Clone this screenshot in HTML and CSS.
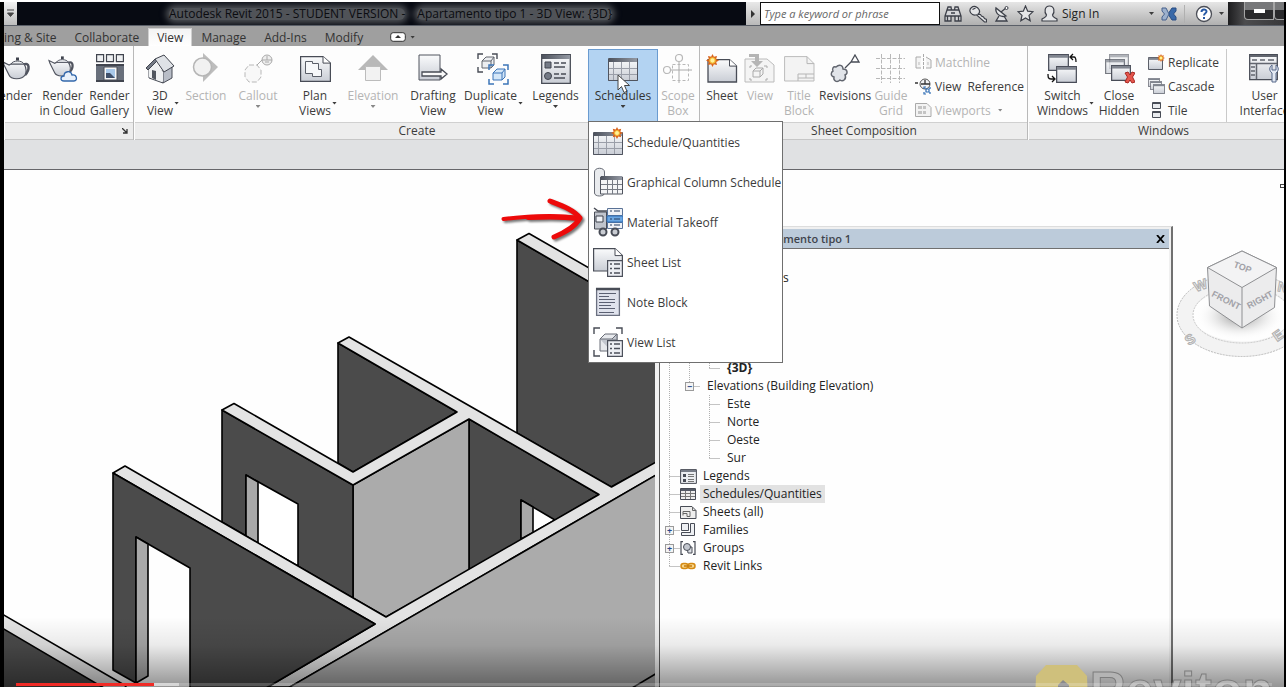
FILE: index.html
```html
<!DOCTYPE html>
<html lang="en">
<head>
<meta charset="utf-8">
<title>Autodesk Revit 2015</title>
<link rel="stylesheet" href="styles.css">
</head>
<body>
<svg class="defs" aria-hidden="true">
  <defs>
    <linearGradient id="metal" x1="0" y1="0" x2="0" y2="1"><stop offset="0" stop-color="#fafbfc"/><stop offset="1" stop-color="#c9cdd5"/></linearGradient>
    <linearGradient id="head" x1="0" y1="0" x2="1" y2="0"><stop offset="0" stop-color="#4d525d"/><stop offset="1" stop-color="#9499a3"/></linearGradient>
    <symbol id="spark" viewBox="0 0 12 12"><path d="M6 0l1.3 2.6L10.2 1.800 9.400 4.700 12 6 9.400 7.300l.8 2.900-2.900-.8L6 12 4.700 9.400l-2.900.8.8-2.900L0 6l2.600-1.300L1.800 1.800l2.900.8z" fill="#d9641c"/><circle cx="6" cy="6" r="2.500" fill="#fff29a" stroke="#f3b52c"/></symbol>
    <symbol id="grid" viewBox="0 0 30 24"><path d="M.5 1.500h29v22H.5z" fill="url(#metal)" stroke="#50545f"/><path d="M1 1h28v4H1z" fill="url(#head)"/><path d="M1 11.500h28M1 17.500h28M5.500 5v18M13.500 5v18M21.500 5v18" stroke="#9a9ea8" fill="none"/><path d="M.5 23.500h29" stroke="#50545f"/></symbol>
    <symbol id="teapot" viewBox="0 0 30 26"><path d="M22 9c7-4 7 5 2 10" fill="none" stroke="#50545f" stroke-width="2.500"/><path d="M8 9L2 6l1 3 5 10c2 5 13 5 16 0 2-4 1-8-1-11H10z" fill="url(#metal)" stroke="#50545f" stroke-width="1.200"/><path d="M10 8c2-4 11-4 13 0z" fill="#eceef1" stroke="#50545f"/><path d="M15 3h3" stroke="#3f434d" stroke-width="3"/></symbol>
    <symbol id="win" viewBox="0 0 22 18" preserveAspectRatio="none"><path d="M.7.700h20.600v16.600H.7z" fill="url(#metal)" stroke="#484c57" stroke-width="1.300"/><path d="M1 1h20v3H1z" fill="#80858f"/></symbol>
    <symbol id="listcard" viewBox="0 0 16 17"><path d="M.6.600h14.800v15.800H.6z" fill="#eceef3" stroke="#4c505b" stroke-width="1.200"/><path d="M3 4h2m2 0h6M3 8.500h2m2 0h6M3 13h2m2 0h6" stroke="#4c505b" stroke-width="1.300"/></symbol>
  </defs>
</svg>

<div class="app">
  <header class="titlebar">
    <button class="qat" aria-label="Customize Quick Access Toolbar"><svg width="9" height="9" viewBox="0 0 9 9"><path d="M1 1h7M1.500 4h6L4.500 7.500z" stroke="#444" fill="#444"/></svg></button>
    <h1 class="doc-title"><span>Autodesk Revit 2015 - STUDENT VERSION -</span><span>Apartamento tipo 1 - 3D View: {3D}</span></h1>
    <div class="infocenter">
      <button class="expand" aria-label="Collapse search"><svg width="6" height="8" viewBox="0 0 6 8"><path d="M1 0l4 4-4 4z" fill="#333"/></svg></button>
      <input class="search" type="text" aria-label="Search" placeholder="Type a keyword or phrase">
      <div class="tools">
        <button aria-label="Search"><svg width="18" height="18" viewBox="0 0 18 18"><path d="M3 5l1-3h3l.5 3h3L11 2h3l1 3 2 6v5h-6v-5H7v5H1v-5zM3 5h4.500M10.500 5H15M1 11h6M11 11h6M3.500 11v5M14.500 11v5M7 8h4" fill="#d5d6d9" stroke="#3d4049" stroke-width="1.300"/></svg></button>
        <button aria-label="Subscription Center"><svg width="18" height="18" viewBox="0 0 18 18"><path d="M8.500 9.500c2-1 2.500-3 1.500-5-1.500-3-5-4-7.500-2s-2 5.500 1 7c1.500.8 3 .6 4 .3L15.500 17h2v-2.500l-2-1-1-1.500-2-1-1-1.500zM3.500 4.500L6.500 3" fill="#e3e4e6" stroke="#3d4049" stroke-width="1.200"/></svg></button>
        <button aria-label="Communication Center"><svg width="16" height="17" viewBox="0 0 16 17"><path d="M5 11l-3 5h11l-3-5" fill="#dcdde0" stroke="#3d4049" stroke-width="1.300"/><path d="M2 3c-1 5 4 10 10 8z" fill="#e6e7e9" stroke="#3d4049" stroke-width="1.300"/><path d="M7 7l5-4" stroke="#3d4049" stroke-width="1.300"/><circle cx="12.500" cy="3" r="1.500" fill="#fff" stroke="#3d4049"/></svg></button>
        <button aria-label="Favorites"><svg width="17" height="17" viewBox="0 0 17 17"><path d="M8.500 1l2.200 5.200 5.300.5-4 3.700 1.200 5.400-4.700-2.900-4.700 2.900L5 10.400 1 6.700l5.300-.5z" fill="#e5e6e8" stroke="#3d4049" stroke-width="1.200"/></svg></button>
        <button class="signin"><svg width="17" height="17" viewBox="0 0 17 17"><path d="M5.500 10C3 7 3.500 1 8.500 1s5.500 6 3 9c0 2 1 2 4.500 4v2H1v-2c3.500-2 4.500-2 4.500-4z" fill="#e5e6e8" stroke="#3d4049" stroke-width="1.200"/></svg>Sign In<i class="caret"></i></button>
        <button aria-label="Exchange Apps"><svg width="16" height="14" viewBox="0 0 16 14"><path d="M8 5.500L11 1h4v3l-2.500 3 2.500 3v3h-4L8 8.500z" fill="#3868a8" stroke="#284c83"/><path d="M1 1h4l3 6-3 6H1v-3l2.500-3L1 4z" fill="#9cb0cc" stroke="#46618d"/></svg></button>
        <button class="help" aria-label="Help"><svg width="18" height="18" viewBox="0 0 18 18"><circle cx="9" cy="9" r="7.500" fill="#fff" stroke="#4b4e57" stroke-width="1.300"/><path d="M6.500 7c0-3.500 5-3.200 5-.5C11.500 8.500 9 8 9 10.500M9 12v2" fill="none" stroke="#2759a5" stroke-width="2"/></svg><i class="caret"></i></button>
      </div>
    </div>
    <div class="window-controls">
      <button aria-label="Minimize"><svg width="11" height="4"><path d="M0 0h11v4H0z" fill="#fff"/></svg></button><button aria-label="Restore"><svg width="9" height="12" viewBox="0 0 9 12"><path d="M1 4h8v7H1zM4 4V1h5" fill="none" stroke="#ddd" stroke-width="2"/></svg></button>
    </div>
  </header>

  <nav class="tabs">
    <button>ing &amp; Site</button><button>Collaborate</button><button class="active">View</button><button>Manage</button><button>Add-Ins</button><button>Modify</button>
    <button class="toggle" aria-label="Minimize ribbon"><svg width="16" height="10" viewBox="0 0 16 10"><rect x=".7" y=".7" width="14.600" height="8.600" rx="2.500" fill="#fff" stroke="#333"/><path d="M5 6l3-3 3 3z" fill="#333"/></svg><i class="caret"></i></button>
  </nav>

  <div class="ribbon">
    <section class="panel presentation">
      <div class="tools-row">
        <button><svg width="30" height="26"><use href="#teapot"/></svg><span class="label">ender</span></button>
        <button><svg width="32" height="27" viewBox="0 0 32 27"><use href="#teapot" width="28" height="24"/><path d="M17 26c-4 0-4-5 0-5 0-5 7-6 8-1 5-1 6 6 2 6z" fill="#e8f0fa" stroke="#3267ab" stroke-width="1.300"/></svg><span class="label">Render<br>in Cloud</span></button>
        <button><svg width="28" height="29" viewBox="0 0 28 29"><path d="M.6.600h7v7h-7zM10.500.600h7v7h-7zM20.400.600h7v7h-7z" fill="#eef0f2" stroke="#41454f" stroke-width="1.200"/><path d="M0 10h28v18H0z" fill="#69707c"/><path d="M0 10h28v2H0zM0 26h28v2H0z" fill="#41454f"/><path d="M8 13h13v13H8z" fill="#f7f7f7" stroke="#4a4e58"/><path d="M10 15h9v9h-9z" fill="#a9c9ea"/><path d="M10 19l4 0 5 5h-9z" fill="#40506a"/></svg><span class="label">Render<br>Gallery</span></button>
      </div>
      <h2><button class="launcher" aria-label="Graphic display options"><svg width="6" height="6" viewBox="0 0 6 6"><path d="M0 0l5 5M5 1v4H1" fill="none" stroke="#333" stroke-width="1.300"/></svg></button></h2>
    </section>

    <section class="panel create">
      <div class="tools-row">
        <button><svg width="30" height="30" viewBox="0 0 30 30"><path d="M4 13l14 4v12L4 24z" fill="#eef0f2" stroke="#484c56"/><path d="M18 17l9-5v12l-9 5z" fill="#b8bdc7" stroke="#484c56"/><path d="M4 14l6-7 8 11v10L4 23z" fill="#eef0f2"/><path d="M1 14L10 5l2 2-9 9z" fill="#747a86" stroke="#41454f"/><path d="M10 5l9-4 10 11-10 6z" fill="#dfe2e6" stroke="#41454f"/><path d="M7 16l4 1v9l-4-2z" fill="#50555f"/></svg><span class="label">3D<br>View</span><i class="caret"></i></button>
        <button disabled><svg width="28" height="31" viewBox="0 0 28 31"><path d="M11 0l15 14-15 15z" fill="#bdbdbd"/><circle cx="10.500" cy="14" r="9" fill="#f1f1f1" stroke="#b5b5b5" stroke-width="1.500"/></svg><span class="label">Section</span></button>
        <button disabled class="below"><svg width="30" height="30" viewBox="0 0 30 30"><path d="M6 11h8l4 5v7l-4 5H6l-4-5v-7z" fill="#f8f8f8" stroke="#b8b8b8" stroke-dasharray="5 2"/><path d="M14 11l5-5" stroke="#aaa"/><circle cx="24" cy="6" r="5" fill="#eee" stroke="#aaa"/><path d="M19 6h10M24 2v4M22 8h4" stroke="#aaa"/></svg><span class="label">Callout</span><i class="caret"></i></button>
        <button><svg width="31" height="26" viewBox="0 0 31 26"><path d="M.6.600H23l7.400 6.500v18.300H.6z" fill="url(#metal)" stroke="#484c56" stroke-width="1.200"/><path d="M23 .6v6.500h7" fill="#fff" stroke="#484c56"/><path d="M5.500 5.500h7v2h6v6h3v7h-9v-3h-7z" fill="#f7f8fa" stroke="#5a5e68"/></svg><span class="label">Plan<br>Views</span><i class="caret"></i></button>
        <button disabled class="below"><svg width="30" height="27" viewBox="0 0 30 27"><path d="M15 0l15 15H0z" fill="#b8b8b8"/><path d="M7.500 11.500h15v14h-15z" fill="#f2f2f2" stroke="#bcbcbc"/></svg><span class="label">Elevation</span><i class="caret"></i></button>
        <button><svg width="31" height="29" viewBox="0 0 31 29"><path d="M1 1h21v25H1z" fill="url(#metal)" stroke="#50545f"/><path d="M4 18h19v-3l6 5-6 5v-3H4z" fill="#fafafa" stroke="#484c56" stroke-width="1.300"/></svg><span class="label">Drafting<br>View</span></button>
        <button><svg width="32" height="32" viewBox="0 0 32 32"><path d="M1 6V1h5m9 0h5v5M1 14v5h5" fill="none" stroke="#484c56" stroke-width="1.400"/><path d="M5 8l4-4h8v8l-3 3H5z" fill="#eceef1" stroke="#62666f"/><path d="M5 8h9v7m0-7l3-4" fill="none" stroke="#62666f"/><path d="M12 17v-5h5m9 0h5v5m0 9v5h-5m-9 0h-5v-5" fill="none" stroke="#3c75b8" stroke-width="1.500"/><path d="M16 20l4-4h8v8l-3 3h-9z" fill="#d5e7f8" stroke="#3c75b8"/><path d="M16 20h9v7m0-7l3-4" fill="none" stroke="#3c75b8"/></svg><span class="label">Duplicate<br>View</span><i class="caret"></i></button>
        <button class="below"><svg width="30" height="30" viewBox="0 0 30 30"><path d="M.7.700h28.600v28.600H.7z" fill="url(#metal)" stroke="#484c56" stroke-width="1.300"/><path d="M1 1h28v4H1z" fill="url(#head)"/><path d="M4 8h6v6H4z" fill="#747a86" stroke="#41454f"/><circle cx="7" cy="22" r="3.500" fill="#747a86" stroke="#41454f"/><path d="M13 9h5m2 0h5M13 13h11M13 20h5m2 0h5M13 24h11" stroke="#484c56" stroke-width="1.300"/></svg><span class="label">Legends</span><i class="caret"></i></button>
        <div class="dropdown">
          <button class="below open" aria-haspopup="true" aria-expanded="true"><svg width="30" height="24"><use href="#grid"/></svg><span class="label">Schedules</span><i class="caret"></i></button>
          <svg class="pointer" width="13" height="20" viewBox="0 0 13 20"><path d="M1 1v15l3.500-3.500L7 18.500l3-1.200-2.500-5.800h5z" fill="#fff" stroke="#444"/></svg>
          <ul class="menu">
            <li><button><svg width="30" height="30" viewBox="0 0 30 30"><use href="#grid" y="4" width="30" height="24"/><use href="#spark" x="18" y="0" width="12" height="12"/></svg>Schedule/Quantities</button></li>
            <li><button><svg width="30" height="30" viewBox="0 0 30 30"><path d="M1.500 5c0-5 10-5 10 0v21c0 4-10 4-10 0z" fill="#e9ebee" stroke="#686c76"/><path d="M7.500 10h22v17h-22z" fill="#f4f5f7" stroke="#50545f"/><path d="M8 9h21v4H8z" fill="url(#head)"/><path d="M8 17.500h21M8 22.500h21M14.500 13v14M19.500 13v14M24.500 13v14" stroke="#757a84"/></svg>Graphical Column Schedule</button></li>
            <li><button><svg width="30" height="30" viewBox="0 0 30 30"><path d="M1.500 5h12v17h-12z" fill="#c0c4cc" stroke="#484c56"/><path d="M1 1l4 3h9" fill="none" stroke="#484c56" stroke-width="1.500"/><path d="M3 9h7v6H3z" fill="#f0f3f8" stroke="#3f434d"/><path d="M14.500 1.500h15v7h-15zM14.500 15.500h15v6h-15z" fill="#eef1f6" stroke="#5a7296"/><path d="M14 9h16v6H14z" fill="#6aa6e2" stroke="#2f6db3"/><path d="M17 4h2m2 0h6M17 12h2m2 0h6M17 18h2m2 0h6" stroke="#263f63"/><circle cx="10" cy="25" r="3.500" fill="#c9ccd2" stroke="#484c56" stroke-width="2"/><circle cx="22" cy="25" r="3.500" fill="#c9ccd2" stroke="#484c56" stroke-width="2"/></svg>Material Takeoff</button></li>
            <li><button><svg width="30" height="30" viewBox="0 0 30 30"><path d="M.6 1.600H22l7.400 7V24H.6z" fill="url(#metal)" stroke="#484c56" stroke-width="1.200"/><path d="M22 1.600v7h7" fill="#fff" stroke="#484c56"/><use href="#listcard" x="14" y="13" width="16" height="17"/></svg>Sheet List</button></li>
            <li><button><svg width="30" height="30" viewBox="0 0 30 30"><path d="M3.600 1.600h22.800v26.800H3.600z" fill="#dfe2ec" stroke="#6b7080" stroke-width="1.300"/><path d="M3 2h24" stroke="#484c56" stroke-width="2.500"/><path d="M6 6.500h17M6 9.500h10M6 12.500h16M6 15.500h16M6 18.500h12M6 21.500h16M6 25.500h15" stroke="#5b6072"/></svg>Note Block</button></li>
            <li><button><svg width="30" height="30" viewBox="0 0 30 30"><path d="M1 7V1h6m16 0h6v6M1 23v6h6" fill="none" stroke="#484c56" stroke-width="1.400"/><path d="M7 12l5-5h12v17H7z" fill="#e7e9ed" stroke="#686c76"/><path d="M7 12h12l5-5v6h-5v12" fill="#c2c6ce" stroke="#686c76"/><use href="#listcard" x="14" y="13" width="16" height="17"/></svg>View List</button></li>
          </ul>
        </div>
        <button disabled><svg width="30" height="30" viewBox="0 0 30 30"><circle cx="16" cy="4" r="3.500" fill="none" stroke="#b8b8b8" stroke-width="1.200"/><circle cx="4" cy="16" r="3.500" fill="none" stroke="#b8b8b8" stroke-width="1.200"/><path d="M16 8v21M8 16h21" stroke="#aaa"/><path d="M9.500 10.500h16v16h-16z" fill="none" stroke="#b8b8b8" stroke-dasharray="3 2"/></svg><span class="label">Scope<br>Box</span></button>
      </div>
      <h2>Create</h2>
    </section>

    <section class="panel sheets">
      <div class="tools-row">
        <button><svg width="32" height="30" viewBox="0 0 32 30"><path d="M2 5.600h21.500l7 6.500V28H2z" fill="url(#metal)" stroke="#484c56" stroke-width="1.300"/><path d="M23.500 5.600v6.500h7" fill="#fff" stroke="#484c56"/><use href="#spark" x="0" y="0" width="13" height="13"/></svg><span class="label">Sheet</span></button>
        <button disabled><svg width="32" height="30" viewBox="0 0 32 30"><path d="M1 5h22l7 6v17H1z" fill="#f4f4f4" stroke="#bbb"/><path d="M5 0h10v7h4l-6 6-6-6h4V3H5z" fill="#b5b5b5"/><path d="M6 14v-2h2m12 0h3v2M6 24v2h2m13 0h2v-2M9 17l3-3h7v6l-3 3H9zM9 17h7v6m0-6l3-3" fill="none" stroke="#aaa"/></svg><span class="label">View</span></button>
        <button disabled><svg width="31" height="26" viewBox="0 0 31 26"><path d="M.6.600H23l7 7V25H.6z" fill="#f3f3f3" stroke="#bbb"/><path d="M23 .6v7h7M14 18h16M14 22h16M14 18v7M22 18v4" fill="none" stroke="#b5b5b5"/></svg><span class="label">Title<br>Block</span></button>
        <button><svg width="30" height="30" viewBox="0 0 30 30"><path d="M6 13c3-3 7-2 7 2 5 0 5 5 2 6 2 4-2 7-5 5-3 3-7 1-6-3-4-1-3-5-1-6-1-2 0-5 3-4z" fill="#e1e4e9" stroke="#62666f" stroke-width="1.400"/><path d="M15 14l7-7M25 1l4 7h-8z" fill="#fff" stroke="#484c56" stroke-width="1.300"/></svg><span class="label">Revisions</span></button>
        <button disabled><svg width="30" height="30" viewBox="0 0 30 30"><path d="M5.500 0v29M14.500 0v29M23.500 0v29M0 4.500h29M0 14.500h29M0 24.500h29" fill="none" stroke="#b8b8b8" stroke-dasharray="4 1.500"/></svg><span class="label">Guide<br>Grid</span></button>
        <div class="stack">
          <button disabled><svg width="17" height="16" viewBox="0 0 17 16"><path d="M6 3H1v11h5M11 3l5 3v8h-5" fill="#f4f4f4" stroke="#aaa"/><path d="M8.500 0v16" stroke="#aaa" stroke-dasharray="3 1"/><path d="M4 8v3M13 8v3" stroke="#bbb"/></svg>Matchline</button>
          <button><svg width="17" height="17" viewBox="0 0 17 17"><circle cx="10" cy="6" r="5" fill="#f4f4f4" stroke="#555"/><path d="M0 5h3M6 6h9M10 2v4" stroke="#333" stroke-width="1.300"/><path d="M9 11V9h2m4 2V9M9 14v2h2m4-2v2m-4-5h3v3h-3z" fill="none" stroke="#2d6cb4" stroke-width="1.200"/></svg>View&nbsp; Reference</button>
          <button disabled><svg width="17" height="14" viewBox="0 0 17 14"><path d="M.5.500H12l4 4v9H.5z" fill="#f3f3f3" stroke="#aaa"/><path d="M3 3h4v3H3zM8 3h3v3H8zM3 8h4v3H3zM8 8h3v3H8z" fill="#c4c4c4"/></svg>Viewports<i class="caret"></i></button>
        </div>
      </div>
      <h2>Sheet Composition</h2>
    </section>

    <section class="panel windows">
      <div class="tools-row">
        <button><svg width="32" height="31" viewBox="0 0 32 31"><use href="#win" x="1" y="1" width="21" height="17"/><use href="#win" x="9" y="13" width="21" height="17"/><path d="M24 4h3c2 0 2 2 2 5M26 1l-3 3 3 3M7 26H4c-3 0-3-2-3-5M5 23l3 3-3 3" fill="none" stroke="#111" stroke-width="1.300"/></svg><span class="label">Switch<br>Windows</span><i class="caret"></i></button>
        <button><svg width="31" height="31" viewBox="0 0 31 31"><use href="#win" x="5" y="1" width="20" height="15" opacity=".6"/><use href="#win" x="1" y="6" width="20" height="15" opacity=".75"/><use href="#win" x="7" y="12" width="20" height="16"/><path d="M21 20l3-1 2 3 2-3 3 1-2.500 4 2.500 5-3 1-2-3-2 3-3-1 2.500-5z" fill="#e5564d" stroke="#a92822"/></svg><span class="label">Close<br>Hidden</span></button>
        <div class="stack">
          <button><svg width="17" height="17" viewBox="0 0 17 17"><use href="#win" x="0" y="3" width="15" height="13"/><use href="#spark" x="9" y="0" width="8" height="8"/></svg>Replicate</button>
          <button><svg width="17" height="16" viewBox="0 0 17 16"><use href="#win" x="0" y="0" width="12" height="9"/><use href="#win" x="2" y="3" width="12" height="9"/><use href="#win" x="5" y="6" width="12" height="10"/></svg>Cascade</button>
          <button><svg width="17" height="16" viewBox="0 0 17 16"><path d="M4.500.500h8v6h-8zM4.500 9.500h8v6h-8z" fill="#e9ebee" stroke="#484c56"/><path d="M5 1.500h7M5 10.500h7" stroke="#484c56"/></svg>Tile</button>
        </div>
        <button class="ui"><svg width="32" height="30" viewBox="0 0 32 30"><path d="M.7.700h27.600v25H.7z" fill="url(#metal)" stroke="#484c56" stroke-width="1.300"/><path d="M1 1h27v2H1z" fill="#62666f"/><path d="M3 6h5M11 6h5M19 6h6M1 9.500h27M7.500 9v16M2 13h4M2 17h4M2 21h4" stroke="#62666f" stroke-width="1.500"/><path d="M23 28V19c-3-2-3-6 0-8v5h4v-5c3 2 3 6 0 8v9z" fill="#e3e9f3" stroke="#56688a"/></svg><span class="label">User<br>Interface</span></button>
      </div>
      <h2>Windows</h2>
    </section>
  </div>

  <div class="options-bar"></div>

  <main class="canvas">
    <svg class="model" width="651" height="517" viewBox="4 170 651 517" role="img" aria-label="3D view of walls">
      <g stroke="#000" stroke-width="1.600" stroke-linejoin="round">
        <path d="M517 240L657 321V462L611 487 517 433z" fill="#4b4b4b"/>
        <path d="M517 240L529 233.500 657 307V321z" fill="#e3e3e3"/>
        <path d="M338 343V463L353 472 457 412z" fill="#4b4b4b"/>
        <path d="M469 419V571L599 494.500z" fill="#4b4b4b"/>
        <path d="M521 500L555 520 533 532.500 521 539z" fill="#fff"/>
        <path d="M521 500L533 507V532.500L521 539z" fill="#a9a9a9"/>
        <path d="M353 485L469 419V571L386 617 353 598z" fill="#ababab"/>
        <path d="M222 410V522L353 598V485z" fill="#4b4b4b"/>
        <path d="M246 475L298 504V566L246 536z" fill="#fff"/>
        <path d="M246 475L258 482V543L246 536z" fill="#a9a9a9"/>
        <path d="M338 343L349 337 611.500 487 657 461.500V474.500L290 687H268L375 624 113 473 125 466 386 617 599 494.500 469 419 353 485 222 410 234 403.500 353 472 457 412z" fill="#e3e3e3"/>
        <path d="M657 474.500L288 688H657z" fill="#ababab"/>
        <path d="M632 688L657 673" fill="none"/>
        <path d="M2 614L126 686 120 695H80L2 628z" fill="#e3e3e3"/>
        <path d="M2 628L104 688H2z" fill="#4b4b4b"/>
        <path d="M113 473L375 624 266 688H190V568L136 537V683L113 670z" fill="#4b4b4b"/>
        <path d="M136 537L148 544V676L136 683z" fill="#a9a9a9"/>
      </g>
    </svg>

    <section class="browser" aria-label="Project Browser">
      <div class="browser-frame">
        <header><h2>Project Browser Apartamento tipo 1</h2><button aria-label="Close"><svg width="9" height="8" viewBox="0 0 9 8"><path d="M1 0l7 8M8 0L1 8" stroke="#000" stroke-width="1.800"/></svg></button></header>
        <ul class="tree">
          <li class="first"><i class="v"></i><i class="v"></i><i class="t"></i><span>Floor Plans</span></li>
          <li><i class="v"></i><i class="v"></i><i class="l"></i><b>{3D}</b></li>
          <li><i class="v"></i><i class="l"><button class="box" aria-label="Collapse">−</button></i><span>Elevations (Building Elevation)</span></li>
          <li><i class="v"></i><i></i><i class="t"></i><span>Este</span></li>
          <li><i class="v"></i><i></i><i class="t"></i><span>Norte</span></li>
          <li><i class="v"></i><i></i><i class="t"></i><span>Oeste</span></li>
          <li><i class="v"></i><i></i><i class="l"></i><span>Sur</span></li>
          <li class="root"><i class="t"></i><svg width="17" height="15" viewBox="0 0 17 15"><path d="M.6.600h15.800v13.800H.6z" fill="#eceef1" stroke="#484c56"/><path d="M1 1h15v2H1z" fill="#777c87"/><path d="M3 5h3v3H3zM3 10h3v3H3z" fill="#484c56"/><path d="M8 5.500h6M8 7.500h6M8 10.500h6M8 12.500h6" stroke="#777"/></svg><span>Legends</span></li>
          <li class="root"><i class="t"></i><svg width="17" height="12" viewBox="0 0 17 12"><path d="M.5.500h15v11H.5z" fill="#eee" stroke="#484c56"/><path d="M1 1h14v2H1z" fill="#555a66"/><path d="M1 5.500h14M1 8.500h14M5.500 3v8M10.500 3v8" stroke="#777"/></svg><span class="selected">Schedules/Quantities</span></li>
          <li class="root"><i class="t"></i><svg width="17" height="13" viewBox="0 0 17 13"><path d="M.5.500H12l4 4v8H.5z" fill="#eee" stroke="#484c56"/><path d="M3 9.500v-4h7v5H7v-3H3M12.500 1v3.500H16" fill="none" stroke="#666"/></svg><span>Sheets (all)</span></li>
          <li class="root"><i class="t"><button class="box" aria-label="Expand">+</button></i><svg width="17" height="14" viewBox="0 0 17 14"><path d="M1.500.500h7v7h-7zM10.500.500h4v12h-13v-3h9z" fill="#eef0f3" stroke="#484c56"/></svg><span>Families</span></li>
          <li class="root"><i class="t"><button class="box" aria-label="Expand">+</button></i><svg width="17" height="14" viewBox="0 0 17 14"><path d="M3 .6H1v12.800h2M13 .6h2v12.800h-2" fill="none" stroke="#484c56" stroke-width="1.200"/><path d="M7 6h5v6H8z" fill="#dfe2e7" stroke="#484c56"/><circle cx="7" cy="6" r="3.500" fill="#c4c8d0" stroke="#484c56"/></svg><span>Groups</span></li>
          <li class="root"><i class="l"></i><svg width="17" height="8" viewBox="0 0 17 8"><rect x="1" y="1.500" width="7" height="5" rx="2.500" fill="#f6d48a" stroke="#d58a13" stroke-width="1.500"/><rect x="8" y="1.500" width="7" height="5" rx="2.500" fill="#f6d48a" stroke="#d58a13" stroke-width="1.500"/><path d="M4 4h8" stroke="#c57a0b" stroke-width="1.500"/></svg><span>Revit Links</span></li>
        </ul>
      </div>
    </section>

    <svg class="viewcube" width="110" height="120" viewBox="1174 245 110 120" role="img" aria-label="ViewCube">
      <defs><radialGradient id="shade"><stop offset="0" stop-color="#8a8a8a"/><stop offset="1" stop-color="#fff" stop-opacity="0"/></radialGradient></defs>
      <ellipse cx="1242" cy="315" rx="57" ry="34" fill="none" stroke="#f3f3f3" stroke-width="15"/>
      <ellipse cx="1242" cy="315" rx="65" ry="41.500" fill="none" stroke="#b9b9b9" stroke-dasharray="2 1"/>
      <ellipse cx="1242" cy="315" rx="49" ry="28" fill="none" stroke="#c6c6c6" stroke-dasharray="2 1"/>
      <ellipse cx="1240" cy="316" rx="44" ry="24" fill="url(#shade)"/>
      <path d="M1242 251l34.500 16.500-2 40-32.500 20.500-32.500-22-2-38.500z" fill="#ececed" stroke="#8e8f92"/>
      <path d="M1242 251l34.500 16.500-34.500 20-34.500-20z" fill="#f3f3f4" stroke="#8e8f92"/>
      <path d="M1242 287.500V328" stroke="#8e8f92"/>
      <g class="cube-text">
        <text transform="translate(1233 267) rotate(20)">TOP</text>
        <text transform="translate(1211 296) rotate(27)">FRONT</text>
        <text transform="translate(1249 309) rotate(-28)">RIGHT</text>
      </g>
      <g class="compass">
        <text transform="translate(1189 346) rotate(-35)">S</text>
        <text transform="translate(1196 292) rotate(-20)">W</text>
        <text transform="translate(1277 291) rotate(10)">N</text>
        <text transform="translate(1277 342) rotate(-35)">E</text>
      </g>
    </svg>

    <svg class="note" width="96" height="54" viewBox="496 192 96 54" role="img" aria-label="Arrow to Material Takeoff">
      <g fill="none" stroke="#ed0a0a" stroke-linecap="round" stroke-linejoin="round"><path d="M503.500 219c25-3 50-5 76-1" stroke-width="4"/><path d="M528 217.500c20-1 35-1 50 1" stroke-width="5"/><path d="M550 201c13 5 24 9 30 17-5 9-14 14-26 19" stroke-width="5"/></g>
    </svg>

    <button class="view-restore" aria-label="Restore view"></button>

    <div class="fade"></div>
    <div class="watermark"><svg width="56" height="40" viewBox="0 0 56 40"><path d="M12 2h31l10 11 1 27H1l1-27z" fill="#cfc07c"/><path d="M24 22l5-5 6 5v10H24z" fill="#8a8a8c"/></svg><span>Reviton</span></div>
    <div class="player" role="progressbar" aria-label="Playback" aria-valuenow="11"><span class="played"></span><span class="buffered"></span></div>
  </main>
</div>
</body>
</html>
```
FILE: styles.css
```css
* { box-sizing: border-box; }

body {
  margin: 0;
  min-height: 100vh;
  display: flex;
  flex-direction: column;
  overflow: hidden;
  background: #fff;
  color: #3c3c3c;
  font: 12px/15px "Open Sans", "Noto Sans", sans-serif;
}

.defs { position: absolute; width: 0; height: 0; }

button {
  margin: 0;
  padding: 0;
  border: 0;
  background: none;
  color: inherit;
  font: inherit;
}

h1, h2 { margin: 0; font-size: 12px; font-weight: 400; }
ul { margin: 0; padding: 0; list-style: none; }
svg { display: block; flex: none; }

.app {
  flex: 1;
  display: flex;
  flex-direction: column;
  margin-top: 2px;
  border-left: 4px solid #000;
  border-right: 2px solid #000;
  overflow: hidden;
}

.caret {
  flex: none;
  width: 5px;
  height: 3px;
  background: #3c3c3c;
  clip-path: polygon(0 0, 100% 0, 50% 100%);
}

/* Title bar */
.titlebar {
  display: flex;
  height: 24px;
  background: #070a12;
  border-bottom: 1px solid #5a5f68;
}

.qat {
  width: 13px;
  display: grid;
  place-items: center;
  background: linear-gradient(#f2f2f2, #bdbdbd);
}

.doc-title {
  flex: 1;
  display: flex;
  align-items: center;
  gap: 12px;
  padding-left: 152px;
  white-space: nowrap;
  overflow: hidden;
  color: #0b0c10;
}

.doc-title span {
  line-height: 12px;
  border-radius: 6px;
  background: #505358;
  box-shadow: 0 0 6px 3px #505358;
}

.infocenter { display: flex; }

.expand {
  width: 14px;
  display: grid;
  place-items: center;
  background: linear-gradient(#e8e8e8, #b9b9b9);
}

.search {
  width: 180px;
  padding: 0 3px;
  border: 1px solid #111;
  border-radius: 0;
  background: #fff;
  font: italic 11px/18px "Open Sans", sans-serif;
}

.search::placeholder { color: #666; opacity: 1; }

.tools {
  display: flex;
  align-items: center;
  gap: 7px;
  width: 288px;
  padding: 0 4px;
  background: linear-gradient(#e6e6e6, #b0b0b0);
  color: #222;
}

.tools button { display: flex; align-items: center; }
.signin { flex: 1; gap: 4px; }
.signin .caret { margin-left: auto; }
.help { gap: 6px; padding-left: 10px; border-left: 1px solid #b0b0b0; }

.window-controls {
  display: flex;
  width: 56px;
  padding-left: 16px;
  overflow: hidden;
  background: linear-gradient(90deg, #1d1d1f, #4c4c4e 30%, #38383a);
}

.window-controls button {
  flex: none;
  width: 30px;
  height: 18px;
  display: grid;
  place-items: center;
  border: 1px solid #a5a5a5;
  border-top: 0;
  border-radius: 0 0 0 4px;
  background: linear-gradient(#77787a 45%, #2a2a2c 50%);
}

/* Ribbon tabs */
.tabs {
  display: flex;
  height: 20px;
  padding-top: 2px;
  background: #9f9f9f;
  color: #333;
}

.tabs button { padding: 0 9px; line-height: 17px; }
.tabs button:first-child { padding-left: 0; }
.tabs .active { background: linear-gradient(#f3f3f3, #fff); border: 1px solid #cfcfcf; border-bottom: 0; padding: 0 8px; }
.tabs .toggle { display: flex; align-items: center; gap: 4px; padding-left: 18px; }

/* Ribbon panels */
.ribbon {
  display: flex;
  height: 94px;
  background: #fdfdfd;
}

.panel {
  display: flex;
  flex-direction: column;
  flex: none;
  border-right: 1px solid #b9b9b9;
}

.tools-row {
  flex: 1;
  display: grid;
  justify-content: start;
  padding-top: 3px;
}

.panel h2 {
  flex: none;
  height: 18px;
  margin-left: 1px;
  background: #ededed;
  border-top: 1px solid #d0d0d0;
  border-bottom: 1px solid #c6c6c6;
  text-align: center;
  line-height: 16px;
}

.presentation { width: 130px; overflow: hidden; }
.presentation .tools-row { grid-template-columns: repeat(3, 47px); justify-content: end; }
.presentation h2 { display: flex; justify-content: flex-end; align-items: center; padding-right: 5px; }
.create { width: 566px; }
.create .tools-row { grid-template-columns: 46px 46px 58px 56px 60px 60px 60px 65px 70px 40px; padding-left: 3px; }
.sheets { width: 328px; }
.sheets .tools-row { grid-template-columns: 38px 38px 40px 52px 40px 1fr; justify-content: stretch; padding-left: 3px; }
.windows { flex: 1; min-width: 0; overflow: hidden; border-right: 0; }
.windows .tools-row { grid-template-columns: 62px 50px 82px 76px; padding-left: 4px; }
.windows h2 { padding-left: 14px; }

.tools-row > button,
.dropdown > button {
  display: grid;
  grid-template-columns: 1fr auto 1fr;
  grid-template-rows: 39px 30px;
  white-space: nowrap;
}

.tools-row > button > svg,
.dropdown > button > svg {
  grid-area: 1 / 1 / 2 / -1;
  justify-self: center;
  align-self: center;
}

.label { grid-area: 2 / 2; text-align: center; }
.tools-row > button .caret { grid-area: 2 / 3; align-self: center; margin-left: 1px; }

.tools-row > .below .caret,
.dropdown > .below .caret {
  grid-area: 2 / 1 / 3 / -1;
  justify-self: center;
  align-self: start;
  margin: 17px 0 0;
}

.tools-row button:disabled { color: #b4b4b4; }
.tools-row button:disabled .caret { background: #888; }

.stack {
  display: flex;
  flex-direction: column;
  gap: 6px;
  padding: 4px 0 0 4px;
}

.stack button {
  display: flex;
  align-items: center;
  gap: 3px;
  height: 18px;
  white-space: nowrap;
}

.stack .caret { margin-left: 4px; }
.ui { border-left: 1px solid #c9c9c9; }

/* Schedules drop-down */
.dropdown { position: relative; display: grid; }
.dropdown > .open { background: #b3d3f2; outline: 1px solid #6a9bd0; outline-offset: -1px; color: #333; }

.pointer { position: absolute; left: 29px; top: 25px; }

.menu {
  position: absolute;
  z-index: 10;
  top: 100%;
  left: 0;
  margin-top: -1px;
  width: 195px;
  background: #fff;
  border: 1px solid #6f6f6f;
}

.menu button {
  display: flex;
  align-items: center;
  gap: 4px;
  width: 100%;
  height: 40px;
  padding-left: 4px;
  white-space: nowrap;
}

.options-bar {
  height: 30px;
  background: #e0e1e3;
  border-bottom: 1px solid #66666a;
}

/* Drawing area */
.canvas {
  position: relative;
  flex: 1;
  overflow: hidden;
  background: #fefefe;
}

.model { position: absolute; left: 0; top: 0; }

.browser {
  position: absolute;
  left: 651px;
  right: 111px;
  top: 56px;
  bottom: 0;
  padding: 2px 2px 0 4px;
  border-top: 1px solid #ddd;
  border-right: 2px solid #707070;
  background: #f0f0f0;
}

.browser-frame {
  height: 100%;
  background: #fefefe;
  border-left: 1px solid #5c5c5c;
}

.browser header {
  display: flex;
  justify-content: space-between;
  align-items: center;
  height: 20px;
  padding-right: 4px;
  background: #bccbda;
  border-bottom: 1px solid #707070;
}

.browser header h2 { font-size: 11px; font-weight: 600; color: #3f444c; }

.tree { padding-top: 20px; color: #222; }
.tree li { display: flex; align-items: center; height: 18px; white-space: nowrap; }
.tree .first { margin-bottom: 72px; }
.tree span, .tree b { margin-left: 4px; padding: 0 3px; line-height: 18px; }
.tree .root span { margin-left: 3px; }
.tree .selected { background: #e2e2e2; }

.tree i { position: relative; flex: none; width: 20px; height: 18px; }
.tree .v { background: repeating-linear-gradient(#b0b0b0 0 1px, transparent 1px 2px) 9px 0 / 1px 18px no-repeat; }

.tree .t {
  background:
    repeating-linear-gradient(#b0b0b0 0 1px, transparent 1px 2px) 9px 0 / 1px 18px no-repeat,
    linear-gradient(#c4c4c4, #c4c4c4) 9px 9px / 11px 1px no-repeat;
}

.tree .l {
  background:
    repeating-linear-gradient(#b0b0b0 0 1px, transparent 1px 2px) 9px 0 / 1px 9px no-repeat,
    linear-gradient(#c4c4c4, #c4c4c4) 9px 9px / 11px 1px no-repeat;
}

.box {
  display: grid;
  place-items: center;
  width: 9px;
  height: 9px;
  margin: 5px;
  border: 1px solid #9a9a9a;
  background: #f4f4f4;
  color: #2c4a8a;
  font: 700 9px/7px "Open Sans", sans-serif;
}

.viewcube { position: absolute; right: 0; top: 75px; }
.cube-text { font: 700 9px "Liberation Sans", sans-serif; fill: #a2a2a8; }
.compass { font: 700 14px "Liberation Sans", sans-serif; fill: #f2f2f2; stroke: #b0b0b0; }

.note { position: absolute; left: 492px; top: 22px; filter: drop-shadow(2px 2px 1px #777); }

.view-restore { position: absolute; right: 0; top: 14px; width: 4px; height: 4px; border: 1px solid #444; border-right: 0; }

.watermark {
  position: absolute;
  right: 11px;
  bottom: -16px;
  display: flex;
  height: 40px;
  font: 700 50px/54px "Liberation Sans", sans-serif;
  color: #b4b4b4;
  -webkit-text-stroke: 1px #7d7d7d;
}

.fade {
  position: absolute;
  left: 0;
  right: 0;
  bottom: 0;
  height: 70px;
  background: linear-gradient(transparent, rgba(0, 0, 0, .08) 40%, rgba(0, 0, 0, .42));
}

.player {
  position: absolute;
  left: 12px;
  right: 12px;
  bottom: 1px;
  display: flex;
  height: 3px;
  background: rgba(255, 255, 255, .2);
}

.played { width: 11%; background: #f02b26; }
.buffered { width: 2%; background: rgba(255, 255, 255, .5); }
```
